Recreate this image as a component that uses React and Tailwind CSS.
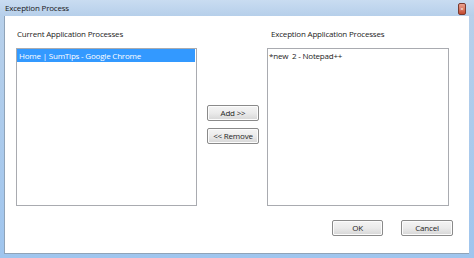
import React from "react";

const font = { fontFamily: '"Open Sans", "Noto Sans", sans-serif' };

function Btn({ children, w }) {
  return (
    <div
      className={`${w} h-[16px] flex items-center justify-center rounded-[2px] border border-[#8a8a8a] bg-gradient-to-b from-[#f4f4f4] via-[#ebebeb] to-[#d6d6d6] text-[8px] tracking-[-0.2px] text-[#1e1e1e] leading-none shadow-[inset_0_0_0_1px_#fcfcfc]`}
    >
      {children}
    </div>
  );
}

export default function App() {
  return (
    <div
      className="w-[474px] h-[258px] flex flex-col bg-gradient-to-b from-[#b9d1ea] to-[#9fc5ee] overflow-hidden"
      style={font}
    >
      <div className="h-[16px] flex items-center pl-[5px] pr-[8px] bg-gradient-to-b from-[#c9dcf1] to-[#b6cfea]">
        <span className="text-[8px] tracking-[-0.2px] leading-none text-[#1a1a1a]">Exception Process</span>
        <div className="ml-auto w-[8px] h-[12px] mt-[1px] rounded-[2px] border border-[#7a3a2e] bg-gradient-to-b from-[#e9a18f] to-[#c3492f] flex items-center justify-center">
          <span className="text-[6px] leading-none text-white">×</span>
        </div>
      </div>
      <div className="ml-[4px] mr-[5px] h-[238px] bg-white border-l border-b border-[#8fa3b8] flex flex-col pt-[12px] pl-[11px] pr-[16px] tracking-[-0.2px]">
        <div className="flex items-start">
          <div className="flex flex-col">
            <div className="h-[12px] leading-[12px] pl-[1px] text-[8px] text-[#1c1c1c]">Current Application Processes</div>
            <div className="mt-[8px] w-[181px] h-[158px] border border-[#a9abb0] bg-white">
              <div className="h-[13px] mr-[1px] bg-[#3399ff] pl-[2px] text-[8px] leading-[13px] text-white">
                Home | SumTips - Google Chrome
              </div>
            </div>
          </div>
          <div className="ml-[10px] mt-[77px] flex flex-col gap-[7px]">
            <Btn w="w-[52px]">Add &gt;&gt;</Btn>
            <Btn w="w-[52px]">&lt;&lt; Remove</Btn>
          </div>
          <div className="ml-[8px] flex flex-col">
            <div className="h-[12px] leading-[12px] pl-[4px] text-[8px] text-[#1c1c1c]">Exception Application Processes</div>
            <div className="mt-[8px] w-[182px] h-[158px] border border-[#a9abb0] bg-white">
              <div className="h-[13px] pl-[1px] text-[8px] leading-[13px] text-[#1c1c1c] whitespace-pre">*new  2 - Notepad++</div>
            </div>
          </div>
        </div>
        <div className="mt-[14px] flex justify-end gap-[18px]">
          <Btn w="w-[51px]">OK</Btn>
          <Btn w="w-[52px]">Cancel</Btn>
        </div>
      </div>
    </div>
  );
}
